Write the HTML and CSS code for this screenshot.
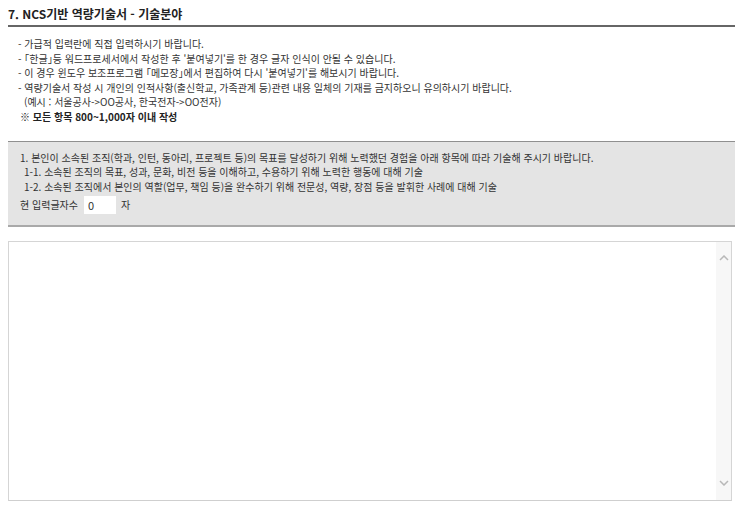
FILE: index.html
```html
<!DOCTYPE html>
<html lang="ko">
<head>
<meta charset="utf-8">
<link rel="stylesheet" href="styles.css">
</head>
<body>
<div class="page">
  <h2 class="title">7. NCS기반 역량기술서 - 기술분야</h2>
  <ul class="notes">
    <li>- 가급적 입력란에 직접 입력하시기 바랍니다.</li>
    <li>- <span class="brk">「한글」</span>등 워드프로세서에서 작성한 후 '붙여넣기'를 한 경우 글자 인식이 안될 수 있습니다.</li>
    <li>- 이 경우 윈도우 보조프로그램 <span class="brk">「메모장」</span>에서 편집하여 다시 '붙여넣기'를 해보시기 바랍니다.</li>
    <li>- 역량기술서 작성 시 개인의 인적사항(출신학교, 가족관계 등)관련 내용 일체의 기재를 금지하오니 유의하시기 바랍니다.</li>
    <li class="example">(예시 : 서울공사-&gt;OO공사, 한국전자-&gt;OO전자)</li>
    <li class="strong">※ 모든 항목 800~1,000자 이내 작성</li>
  </ul>
  <div class="question">
    <p>1. 본인이 소속된 조직(학과, 인턴, 동아리, 프로젝트 등)의 목표를 달성하기 위해 노력했던 경험을 아래 항목에 따라 기술해 주시기 바랍니다.</p>
    <p class="sub">1-1. 소속된 조직의 목표, 성과, 문화, 비전 등을 이해하고, 수용하기 위해 노력한 행동에 대해 기술</p>
    <p class="sub">1-2. 소속된 조직에서 본인의 역할(업무, 책임 등)을 완수하기 위해 전문성, 역량, 장점 등을 발휘한 사례에 대해 기술</p>
    <div class="count">
      <span>현 입력글자수</span>
      <input class="count-input" type="text" value="0" readonly>
      <span>자</span>
    </div>
  </div>
  <div class="answer-box">
    <textarea class="answer"></textarea>
    <div class="scrollbar">
      <svg class="arrow" width="10" height="6" viewBox="0 0 10 6"><path d="M1 5 L5 1 L9 5" fill="none" stroke="#b8b8b8" stroke-width="1.5"/></svg>
      <svg class="arrow" width="10" height="6" viewBox="0 0 10 6"><path d="M1 1 L5 5 L9 1" fill="none" stroke="#b8b8b8" stroke-width="1.5"/></svg>
    </div>
  </div>
</div>
</body>
</html>
```
FILE: styles.css
```css
html, body {
  margin: 0;
  padding: 0;
  background: #fff;
}
body {
  font-family: "Noto Sans CJK KR", "Noto Sans", sans-serif;
  color: #333;
  font-size: 10px;
}
.page {
  padding: 0 8px;
}
.title {
  margin: 0;
  padding-top: 5px;
  padding-bottom: 2px;
  font-size: 12px;
  line-height: 18px;
  font-weight: bold;
  color: #222;
  border-bottom: 2px solid #666;
}
.notes {
  list-style: none;
  margin: 10px 0 0 0;
  padding: 0 0 0 10px;
  line-height: 14.6px;
}
.brk {
  font-feature-settings: "halt";
}
.notes .example {
  padding-left: 6px;
}
.notes .strong {
  padding-left: 2px;
  font-weight: bold;
  color: #222;
}
.question {
  margin-top: 16px;
  background: #e4e4e4;
  border-top: 1px solid #8f8f8f;
  border-bottom: 2px solid #a9a9a9;
  padding: 9px 12px 11px 12px;
  line-height: 14.6px;
  color: #333;
}
.question p {
  margin: 0;
}
.question .sub {
  padding-left: 4px;
}
.count {
  display: flex;
  align-items: center;
  gap: 5px;
  margin-top: 2px;
}
.count-input {
  width: 28px;
  height: 18px;
  border: none;
  padding: 0 0 0 4px;
  margin: 0 0 0 1px;
  background: #fff;
  font-family: inherit;
  font-size: 11px;
  color: #333;
  outline: none;
}
.answer-box {
  display: flex;
  box-sizing: border-box;
  margin-top: 14px;
  width: 724px;
  height: 260px;
  border: 1px solid #d5d5d5;
  border-bottom-color: #cfcfcf;
}
.answer {
  flex: 1;
  display: block;
  border: none;
  resize: none;
  outline: none;
  margin: 0;
  padding: 2px;
  font-family: inherit;
  background: #fff;
}
.scrollbar {
  width: 15px;
  background: #f7f7f7;
  display: flex;
  flex-direction: column;
  justify-content: space-between;
  align-items: center;
  padding: 13px 0 14px 0;
}
.arrow {
  display: block;
}
```
